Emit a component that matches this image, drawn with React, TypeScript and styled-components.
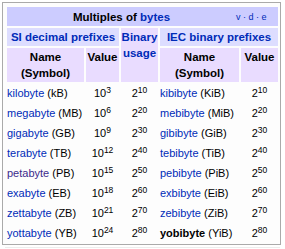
import React from 'react';
import styled, { createGlobalStyle } from 'styled-components';

const GlobalStyle = createGlobalStyle`
    body {
        margin: 0;
        background: #fff;
        font-family: "Liberation Sans", Arial, sans-serif;
    }
`;

const LINK = '#002bb8';
const VISITED = '#3b2a8c';

const Page = styled.div`
    display: flex;
    flex-direction: column;
    align-items: flex-start;
`;

const Navbox = styled.div`
    display: grid;
    grid-template-columns: 77px 33px 37px 79px 37px;
    grid-template-rows: 19px 18px 34px repeat(8, 18px);
    gap: 2px;
    margin: 2px;
    padding: 4px 2px 2px 4px;
    border: 1px solid #aaa;
    background: #fdfdfd;
`;

const TitleCell = styled.div`
    grid-column: 1 / -1;
    display: flex;
    align-items: center;
    background: #ccccff;
    font-size: 11.5px;
    font-weight: bold;
    color: #000;
`;

const TitleText = styled.div`
    flex: 1;
    text-align: center;
`;

const Navbar = styled.div`
    width: 42px;
    font-size: 9px;
    font-weight: normal;
    color: ${LINK};
    white-space: nowrap;
`;

const GroupCell = styled.div<{ $span: number }>`
    grid-column: span ${({ $span }) => $span};
    background: #ddddff;
    color: ${LINK};
    font-size: 11.5px;
    font-weight: bold;
    line-height: 16px;
    padding-top: 1px;
    text-align: center;
    white-space: nowrap;
`;

const HeadCell = styled.div<{ $rows?: number; $link?: boolean }>`
    grid-row: span ${({ $rows }) => $rows ?? 1};
    background: #e9dcff;
    color: ${({ $link }) => ($link ? LINK : '#000')};
    font-size: 11.5px;
    font-weight: bold;
    line-height: 16px;
    padding-top: 1px;
    text-align: center;
`;

const DataCell = styled.div<{ $center?: boolean }>`
    display: flex;
    align-items: center;
    justify-content: ${({ $center }) => ($center ? 'center' : 'flex-start')};
    font-size: 11px;
    color: #000;
    white-space: nowrap;
`;

const Link = styled.a<{ $visited?: boolean }>`
    color: ${({ $visited }) => ($visited ? VISITED : LINK)};
    text-decoration: none;
`;

const SelfLink = styled.strong`
    color: #000;
`;

const Sup = styled.sup`
    font-size: 8.5px;
    line-height: 0;
    vertical-align: 4px;
`;

const Divider = styled.div`
    width: 275px;
    height: 1px;
    margin-left: 5px;
    background: #ececec;
`;

interface IRow {
    si: string;
    siSym: string;
    dec: number;
    bin: number;
    iec: string;
    iecSym: string;
    visited?: boolean;
    self?: boolean;
}

const rows: IRow[] = [
    { si: 'kilobyte', siSym: 'kB', dec: 3, bin: 10, iec: 'kibibyte', iecSym: 'KiB' },
    { si: 'megabyte', siSym: 'MB', dec: 6, bin: 20, iec: 'mebibyte', iecSym: 'MiB' },
    { si: 'gigabyte', siSym: 'GB', dec: 9, bin: 30, iec: 'gibibyte', iecSym: 'GiB' },
    { si: 'terabyte', siSym: 'TB', dec: 12, bin: 40, iec: 'tebibyte', iecSym: 'TiB' },
    { si: 'petabyte', siSym: 'PB', dec: 15, bin: 50, iec: 'pebibyte', iecSym: 'PiB', visited: true },
    { si: 'exabyte', siSym: 'EB', dec: 18, bin: 60, iec: 'exbibyte', iecSym: 'EiB' },
    { si: 'zettabyte', siSym: 'ZB', dec: 21, bin: 70, iec: 'zebibyte', iecSym: 'ZiB' },
    { si: 'yottabyte', siSym: 'YB', dec: 24, bin: 80, iec: 'yobibyte', iecSym: 'YiB', self: true },
];

const App: React.FC = () => {
    return (
        <Page>
            <GlobalStyle />
            <Navbox>
                <TitleCell>
                    <TitleText>Multiples of <Link href="#">bytes</Link></TitleText>
                    <Navbar>v · d · e</Navbar>
                </TitleCell>

                <GroupCell $span={2}>SI decimal prefixes</GroupCell>
                <HeadCell $rows={2} $link>Binary<br />usage</HeadCell>
                <GroupCell $span={2}>IEC binary prefixes</GroupCell>

                <HeadCell>Name<br />(Symbol)</HeadCell>
                <HeadCell>Value</HeadCell>
                <HeadCell>Name<br />(Symbol)</HeadCell>
                <HeadCell>Value</HeadCell>

                {rows.map((r) => (
                    <React.Fragment key={r.si}>
                        <DataCell>
                            <Link href="#" $visited={r.visited}>{r.si}</Link>&nbsp;({r.siSym})
                        </DataCell>
                        <DataCell $center>
                            <span>10<Sup>{r.dec}</Sup></span>
                        </DataCell>
                        <DataCell $center>
                            <span>2<Sup>{r.bin}</Sup></span>
                        </DataCell>
                        <DataCell>
                            {r.self ? <SelfLink>{r.iec}</SelfLink> : <Link href="#">{r.iec}</Link>}&nbsp;({r.iecSym})
                        </DataCell>
                        <DataCell $center>
                            <span>2<Sup>{r.bin}</Sup></span>
                        </DataCell>
                    </React.Fragment>
                ))}
            </Navbox>
            <Divider />
        </Page>
    );
};

export default App;
